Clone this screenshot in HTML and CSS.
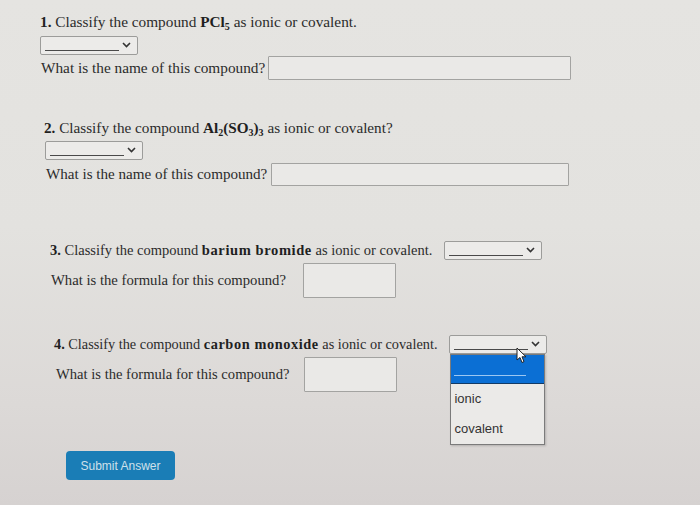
FILE: index.html
```html
<!DOCTYPE html>
<html>
<head>
<meta charset="utf-8">
<link rel="stylesheet" href="styles.css">
</head>
<body>
<div class="page">
  <section class="q q1">
    <p class="prompt"><b>1.</b> Classify the compound <b>PCl<sub>5</sub></b> as ionic or covalent.</p>
    <div class="select"><span class="blank"></span><svg class="chev" width="9" height="6" viewBox="0 0 9 6"><path d="M1 1 L4.5 4.5 L8 1" fill="none" stroke="#333" stroke-width="1.6"/></svg></div>
    <div class="row"><span class="label">What is the name of this compound?</span><span class="input wide"></span></div>
  </section>

  <section class="q q2">
    <p class="prompt"><b>2.</b> Classify the compound <b>Al<sub>2</sub>(SO<sub>3</sub>)<sub>3</sub></b> as ionic or covalent?</p>
    <div class="select"><span class="blank"></span><svg class="chev" width="9" height="6" viewBox="0 0 9 6"><path d="M1 1 L4.5 4.5 L8 1" fill="none" stroke="#333" stroke-width="1.6"/></svg></div>
    <div class="row"><span class="label">What is the name of this compound?</span><span class="input wide2"></span></div>
  </section>

  <section class="q q3">
    <div class="line">
      <p class="prompt small"><b>3.</b> Classify the compound <b class="heavy">barium bromide</b> as ionic or covalent.</p>
      <div class="select"><span class="blank"></span><svg class="chev" width="9" height="6" viewBox="0 0 9 6"><path d="M1 1 L4.5 4.5 L8 1" fill="none" stroke="#333" stroke-width="1.6"/></svg></div>
    </div>
    <div class="row tall"><span class="label small">What is the formula for this compound?</span><span class="input box"></span></div>
  </section>

  <section class="q q4">
    <div class="line">
      <p class="prompt small"><b>4.</b> Classify the compound <b class="heavy">carbon monoxide</b> as ionic or covalent.</p>
      <div class="select open"><span class="blank"></span><svg class="chev" width="9" height="6" viewBox="0 0 9 6"><path d="M1 1 L4.5 4.5 L8 1" fill="none" stroke="#333" stroke-width="1.6"/></svg>
        <ul class="menu">
          <li class="opt sel"><span class="blank light"></span></li>
          <li class="opt">ionic</li>
          <li class="opt">covalent</li>
        </ul>
        <svg class="cursor" width="12" height="17" viewBox="0 0 12 17"><path d="M1 1 L1 13 L4 10.5 L6 15.5 L8 14.6 L6 9.8 L10 9.8 Z" fill="#fff" stroke="#222" stroke-width="1"/></svg>
      </div>
    </div>
    <div class="row tall"><span class="label small">What is the formula for this compound?</span><span class="input box"></span></div>
  </section>

  <div class="actions"><button class="submit">Submit Answer</button></div>
</div>
</body>
</html>
```

FILE: styles.css
```css
html, body {
  margin: 0;
  padding: 0;
}
body {
  width: 700px;
  height: 505px;
  overflow: hidden;
  background: linear-gradient(180deg, #e5e4e1 0%, #e3e2df 45%, #dcd9d7 80%, #d6d2d1 100%);
  font-family: "Liberation Serif", "Times New Roman", serif;
  color: #2b2b2b;
}
.page {
  padding-top: 12px;
}
.q {
  display: flex;
  flex-direction: column;
  align-items: flex-start;
}
.prompt {
  margin: 0;
  font-size: 15.3px;
  line-height: 20px;
  white-space: nowrap;
}
.prompt b {
  font-weight: bold;
  color: #1f1f1f;
}
.prompt sub {
  font-size: 10px;
  line-height: 0;
  vertical-align: -3px;
}
.prompt.small {
  font-size: 14.5px;
}
.heavy {
  letter-spacing: 0.6px;
}
.select {
  position: relative;
  width: 98px;
  height: 19px;
  box-sizing: border-box;
  border: 1px solid #9c9c9a;
  border-radius: 2px;
  background: #ecebe9;
  display: flex;
  align-items: flex-end;
  justify-content: space-between;
  padding: 0 6px 3px 4px;
  flex: none;
}
.blank {
  display: block;
  width: 74px;
  height: 1px;
  background: #4a4a4a;
}
.chev {
  align-self: center;
  margin-top: 2px;
}
.label {
  font-size: 15.3px;
  white-space: nowrap;
}
.label.small {
  font-size: 14.7px;
}
.input {
  display: block;
  border: 1px solid #a3a3a1;
  border-radius: 1px;
  background: #eae9e7;
  box-sizing: border-box;
}
.wide {
  width: 303px;
  height: 24px;
}
.wide2 {
  width: 298px;
  height: 23px;
}
.box {
  width: 93px;
  height: 35px;
}
.row {
  display: flex;
  align-items: center;
  gap: 4px;
}

/* question 1 */
.q1 {
  padding-left: 40px;
}
.q1 .select {
  margin-top: 4px;
}
.q1 .row {
  margin-top: 1px;
  padding-left: 1px;
  gap: 3px;
}

/* question 2 */
.q2 {
  padding-left: 44px;
  margin-top: 38px;
}
.q2 .prompt {
  font-size: 15.2px;
}
.q2 .select {
  margin-top: 3px;
  margin-left: 1px;
}
.q2 .row {
  margin-top: 3px;
  padding-left: 2px;
  gap: 4px;
}
.q2 .label {
  font-size: 15.1px;
}

/* question 3 */
.line {
  display: flex;
  align-items: center;
}
.q3 {
  padding-left: 50px;
  margin-top: 54px;
}
.q3 .line {
  gap: 12px;
}
.q3 .row {
  margin-top: 3px;
  padding-left: 1px;
  gap: 17px;
}

/* question 4 */
.q4 {
  padding-left: 54px;
  margin-top: 36px;
}
.q4 .prompt.small {
  font-size: 14.3px;
}
.q4 .line {
  gap: 12px;
}
.q4 .row {
  margin-top: 3px;
  padding-left: 2px;
  gap: 15px;
}
.q4 .label.small {
  font-size: 14.6px;
}

/* open dropdown */
.menu {
  position: absolute;
  left: 0;
  top: 18px;
  width: 95px;
  margin: 0;
  padding: 0;
  list-style: none;
  background: #ebeae8;
  border: 1px solid #7b7b7b;
  box-shadow: 1px 1px 2px rgba(0,0,0,0.18);
  font-family: "Liberation Sans", Arial, sans-serif;
  font-size: 13px;
  color: #333;
  z-index: 2;
  box-sizing: border-box;
}
.opt {
  height: 30px;
  line-height: 30px;
  padding-left: 3px;
}
.opt.sel {
  height: 29px;
  background: #0b6fd4;
  border-bottom: 1px solid #123a66;
  display: flex;
  align-items: flex-end;
  padding-bottom: 7px;
  box-sizing: border-box;
}
.blank.light {
  background: #9cc7f2;
  width: 72px;
}
.cursor {
  position: absolute;
  left: 66px;
  top: 11px;
  z-index: 3;
}

/* submit */
.actions {
  padding-left: 66px;
  margin-top: 59px;
}
.submit {
  width: 109px;
  height: 29px;
  border: none;
  border-radius: 4px;
  background: #1a7db6;
  color: #cfe0ea;
  font-family: "Liberation Sans", Arial, sans-serif;
  font-size: 12px;
  padding: 0;
}
```
